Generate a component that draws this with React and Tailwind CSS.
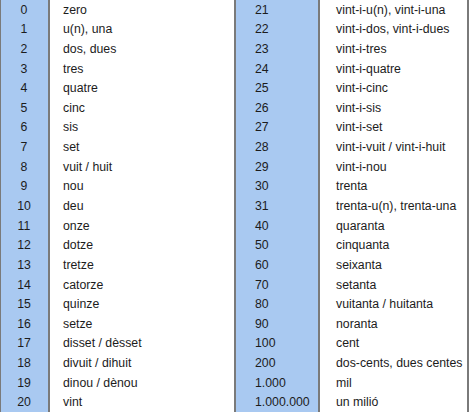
import React from 'react'

const left = [
  ['0', 'zero'], ['1', 'u(n), una'], ['2', 'dos, dues'], ['3', 'tres'], ['4', 'quatre'],
  ['5', 'cinc'], ['6', 'sis'], ['7', 'set'], ['8', 'vuit / huit'], ['9', 'nou'],
  ['10', 'deu'], ['11', 'onze'], ['12', 'dotze'], ['13', 'tretze'], ['14', 'catorze'],
  ['15', 'quinze'], ['16', 'setze'], ['17', 'disset / dèsset'], ['18', 'divuit / dihuit'],
  ['19', 'dinou / dènou'], ['20', 'vint'],
]

const right = [
  ['21', 'vint-i-u(n), vint-i-una'], ['22', 'vint-i-dos, vint-i-dues'], ['23', 'vint-i-tres'],
  ['24', 'vint-i-quatre'], ['25', 'vint-i-cinc'], ['26', 'vint-i-sis'], ['27', 'vint-i-set'],
  ['28', 'vint-i-vuit / vint-i-huit'], ['29', 'vint-i-nou'], ['30', 'trenta'],
  ['31', 'trenta-u(n), trenta-una'], ['40', 'quaranta'], ['50', 'cinquanta'],
  ['60', 'seixanta'], ['70', 'setanta'], ['80', 'vuitanta / huitanta'], ['90', 'noranta'],
  ['100', 'cent'], ['200', 'dos-cents, dues centes'], ['1.000', 'mil'], ['1.000.000', 'un milió'],
]

function Cell({ children, className = '' }) {
  return <div className={'h-[19.65px] flex items-center whitespace-nowrap ' + className}>{children}</div>
}

export default function App() {
  return (
    <div className="w-[471px] flex bg-white text-[12.3px] text-[#1c1c1c] font-['Liberation_Sans',Arial,sans-serif]">
      <div className="w-[50px] bg-[#a9c9f1] border-l border-r-2 border-[#7a7a7a]">
        {left.map(([n]) => <Cell key={n} className="justify-center pr-[1px]">{n}</Cell>)}
      </div>
      <div className="w-[186px] border-r-2 border-[#7a7a7a] pl-[13px]">
        {left.map(([n, w]) => <Cell key={n}>{w}</Cell>)}
      </div>
      <div className="w-[84px] bg-[#a9c9f1] border-r-2 border-[#7a7a7a] pl-[19px]">
        {right.map(([n]) => <Cell key={n}>{n}</Cell>)}
      </div>
      <div className="w-[149px] border-r-2 border-[#7a7a7a] pl-[16px]">
        {right.map(([n, w]) => <Cell key={n}>{w}</Cell>)}
      </div>
    </div>
  )
}
